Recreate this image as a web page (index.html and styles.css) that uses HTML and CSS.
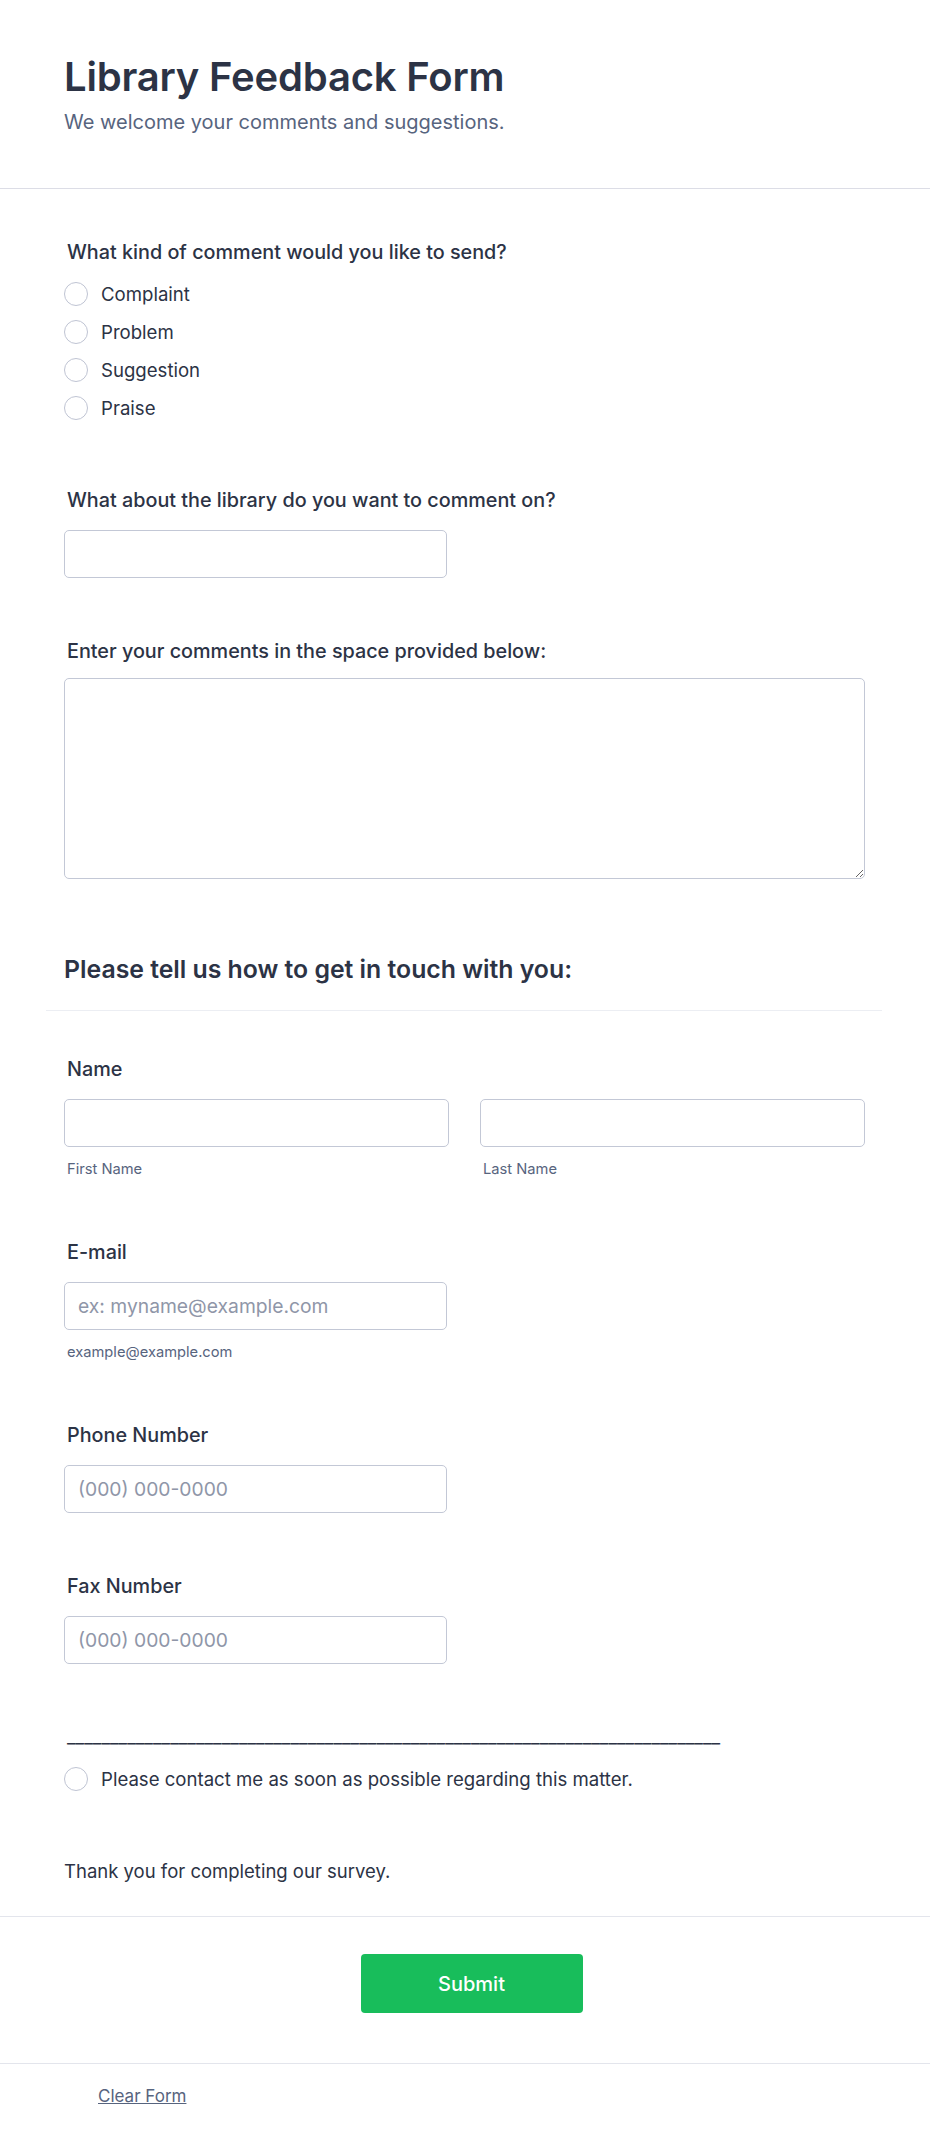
FILE: index.html
```html
<!DOCTYPE html>
<html lang="en">
<head>
<meta charset="utf-8">
<title>Library Feedback Form</title>
<link rel="stylesheet" href="styles.css">
</head>
<body>
<form class="form">
  <header class="form-header">
    <h1 class="title">Library Feedback Form</h1>
    <p class="subtitle">We welcome your comments and suggestions.</p>
  </header>

  <div class="form-body">
    <div class="field field-radio">
      <div class="label">What kind of comment would you like to send?</div>
      <label class="radio-row"><span class="radio"></span><span class="radio-text">Complaint</span></label>
      <label class="radio-row"><span class="radio"></span><span class="radio-text">Problem</span></label>
      <label class="radio-row"><span class="radio"></span><span class="radio-text">Suggestion</span></label>
      <label class="radio-row"><span class="radio"></span><span class="radio-text">Praise</span></label>
    </div>

    <div class="field">
      <div class="label">What about the library do you want to comment on?</div>
      <input class="input input-half" type="text">
    </div>

    <div class="field field-comments">
      <div class="label">Enter your comments in the space provided below:</div>
      <textarea class="textarea"></textarea>
    </div>

    <div class="section-head">
      <h2 class="section-title">Please tell us how to get in touch with you:</h2>
    </div>

    <div class="field field-name">
      <div class="label">Name</div>
      <div class="name-row">
        <div class="name-col">
          <input class="input" type="text">
          <div class="sublabel">First Name</div>
        </div>
        <div class="name-col">
          <input class="input" type="text">
          <div class="sublabel">Last Name</div>
        </div>
      </div>
    </div>

    <div class="field">
      <div class="label">E-mail</div>
      <input class="input input-half" type="text" placeholder="ex: myname@example.com">
      <div class="sublabel">example@example.com</div>
    </div>

    <div class="field">
      <div class="label">Phone Number</div>
      <input class="input input-half" type="text" placeholder="(000) 000-0000">
    </div>

    <div class="field">
      <div class="label">Fax Number</div>
      <input class="input input-half" type="text" placeholder="(000) 000-0000">
    </div>

    <div class="field field-contact">
      <div class="underscores">____________________________________________________________________________</div>
      <label class="radio-row"><span class="radio"></span><span class="radio-text">Please contact me as soon as possible regarding this matter.</span></label>
    </div>

    <p class="thanks">Thank you for completing our survey.</p>
  </div>

  <div class="submit-bar">
    <button type="button" class="submit">Submit</button>
  </div>

  <div class="footer">
    <a class="clear" href="#">Clear Form</a>
  </div>
</form>
</body>
</html>
```

FILE: styles.css
```css
* { box-sizing: border-box; }

html, body {
  margin: 0;
  padding: 0;
  background: #ffffff;
}

body {
  font-family: Inter, "Noto Sans", "Liberation Sans", sans-serif;
  color: #2c3345;
  width: 930px;
  min-height: 2137px;
}

.form-header {
  padding: 50.5px 64px 0;
  height: 189px;
  border-bottom: 1px solid #dcdde6;
}

.title {
  margin: 0;
  font-size: 40px;
  line-height: 52px;
  font-weight: 600;
  color: #2c3345;
  letter-spacing: -0.2px;
}

.subtitle {
  margin: 6.5px 0 0;
  font-size: 20px;
  line-height: 26px;
  color: #57647e;
  font-weight: 400;
}

.form-body {
  padding: 51px 65px 0 64px;
  border-bottom: 1px solid #e3e5ec;
}

.field {
  margin-bottom: 61px;
}

.label {
  font-size: 19.8px;
  line-height: 24px;
  font-weight: 500;
  padding-left: 3px;
  margin-bottom: 18px;
  color: #2c3345;
}

.field-radio .label {
  margin-bottom: 11px;
}

.radio-row {
  display: flex;
  align-items: center;
  height: 38px;
  cursor: pointer;
}

.radio {
  width: 24px;
  height: 24px;
  border-radius: 50%;
  border: 1.5px solid #bfc4d3;
  background: #fff;
  flex: none;
}

.radio-text {
  margin-left: 13px;
  font-size: 18.6px;
  color: #2c3345;
}

.input {
  display: block;
  width: 100%;
  height: 48px;
  border: 1px solid #c3c8d6;
  border-radius: 5px;
  padding: 0 13px;
  font-family: inherit;
  font-size: 19.3px;
  color: #2c3345;
  background: #fff;
  outline: none;
}

.input::placeholder {
  color: #8f96a8;
}

.input-half {
  width: 383px;
}

.textarea {
  display: block;
  width: 801px;
  height: 201px;
  border: 1px solid #c3c8d6;
  border-radius: 5px;
  font-family: inherit;
  font-size: 19px;
  background: #fff;
  outline: none;
}

.field-comments {
  margin-bottom: 74px;
}

.field-comments .label {
  margin-bottom: 15px;
}

.section-head {
  margin: 0 -17px 46px -18px;
  padding: 0 18px 25px;
  border-bottom: 1px solid #eceef3;
}

.section-title {
  margin: 0;
  font-size: 24.8px;
  line-height: 32px;
  font-weight: 600;
  color: #2c3345;
}

.name-row {
  display: flex;
  gap: 31px;
}

.name-col {
  flex: 1;
}

.sublabel {
  margin-top: 12px;
  padding-left: 3px;
  font-size: 14.7px;
  line-height: 20px;
  color: #57647e;
}

.field-contact {
  margin-bottom: 0;
}

.underscores {
  padding-left: 3px;
  font-size: 18.85px;
  line-height: 24px;
  color: #2c3345;
  white-space: nowrap;
  margin-bottom: 11px;
}

.thanks {
  margin: 61px 0 0;
  font-size: 18.5px;
  line-height: 24px;
  color: #2c3345;
  height: 57px;
}

.submit-bar {
  display: flex;
  justify-content: center;
  padding: 37px 0 50px 13px;
  border-bottom: 1px solid #e3e5ec;
}

.submit {
  width: 222px;
  height: 59px;
  border: none;
  border-radius: 4px;
  background: #18bd5b;
  color: #ffffff;
  font-family: inherit;
  font-size: 20px;
  font-weight: 500;
  cursor: pointer;
}

.footer {
  padding: 20px 98px;
}

.clear {
  font-size: 17px;
  line-height: 24px;
  color: #57647e;
  text-decoration: underline;
}
```
